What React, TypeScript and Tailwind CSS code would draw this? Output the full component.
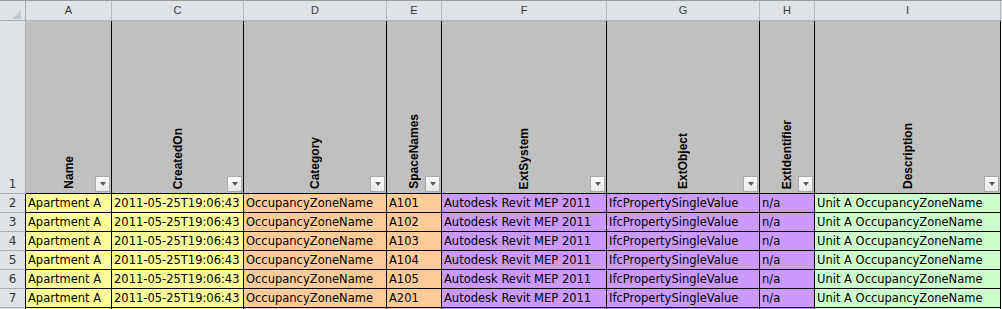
import React from "react";

type Col = { letter: string; title: string; width: string; bg: string };

const cols: Col[] = [
  { letter: "A", title: "Name", width: "w-[86px]", bg: "bg-[#ffff99]" },
  { letter: "C", title: "CreatedOn", width: "w-[132px]", bg: "bg-[#ffff99]" },
  { letter: "D", title: "Category", width: "w-[143px]", bg: "bg-[#ffcc99]" },
  { letter: "E", title: "SpaceNames", width: "w-[55px]", bg: "bg-[#ffcc99]" },
  { letter: "F", title: "ExtSystem", width: "w-[165px]", bg: "bg-[#cc99ff]" },
  { letter: "G", title: "ExtObject", width: "w-[153px]", bg: "bg-[#cc99ff]" },
  { letter: "H", title: "ExtIdentifier", width: "w-[55px]", bg: "bg-[#cc99ff]" },
  { letter: "I", title: "Description", width: "w-[186px]", bg: "bg-[#ccffcc]" },
];

const spaces = ["A101", "A102", "A103", "A104", "A105", "A201"];

// each data row, in column order
const rows = spaces.map((space) => [
  "Apartment A",
  "2011-05-25T19:06:43",
  "OccupancyZoneName",
  space,
  "Autodesk Revit MEP 2011",
  "IfcPropertySingleValue",
  "n/a",
  "Unit A OccupancyZoneName",
]);

function FilterButton() {
  return (
    <div className="absolute right-[1px] bottom-[1px] flex h-[16px] w-[15px] items-center justify-center border border-[#a9a9a9] bg-linear-to-b from-white to-[#e6e6e6]">
      <div className="h-0 w-0 border-t-[4px] border-r-[3.5px] border-l-[3.5px] border-t-[#5a5a5a] border-r-transparent border-l-transparent" />
    </div>
  );
}

export default function App() {
  return (
    <div className="h-[309px] w-[1002px] overflow-hidden bg-white font-['DejaVu_Sans',sans-serif] text-black">
      {/* column letters */}
      <div className="flex h-[21px] border-t border-[#9a9a9a] bg-[#dfe3e8]">
        <div className="relative w-[26px] shrink-0 border-r border-b border-[#a7abb0]">
          <div className="absolute right-[4px] bottom-[1px] h-0 w-0 border-b-[9px] border-l-[9px] border-b-[#c5c9ce] border-l-transparent" />
        </div>
        {cols.map((c) => (
          <div
            key={c.letter}
            className={`${c.width} flex shrink-0 items-center justify-center border-r border-b border-[#b3b8be] font-['Liberation_Sans',Arial,sans-serif] text-[11px] text-[#3a3a3a]`}
          >
            {c.letter}
          </div>
        ))}
        <div className="flex-1 border-b border-[#b3b8be]" />
      </div>

      {/* header row 1 */}
      <div className="flex h-[173px]">
        <div className="flex w-[26px] shrink-0 items-end justify-center border-r border-b border-[#a7abb0] bg-[#dfe3e8] pb-[1px] text-[12px] leading-[16px] text-[#333]">
          1
        </div>
        {cols.map((c) => (
          <div
            key={c.letter}
            className={`${c.width} relative flex shrink-0 items-end justify-center border-r border-b border-black bg-[#c0c0c0] pb-[4px]`}
          >
            <span className="rotate-180 font-['Liberation_Sans',Arial,sans-serif] text-[12px] leading-[14px] font-bold [writing-mode:vertical-rl]">
              {c.title}
            </span>
            <FilterButton />
          </div>
        ))}
        <div className="flex-1" />
      </div>

      {/* data rows */}
      {rows.map((row, i) => (
        <div key={i} className="flex h-[19px]">
          <div className="flex w-[26px] shrink-0 items-center justify-center border-r border-b border-r-black border-b-[#a7abb0] bg-[#dfe3e8] text-[12px] text-[#333]">
            {i + 2}
          </div>
          {row.map((val, j) => (
            <div
              key={j}
              className={`${cols[j].width} ${cols[j].bg} shrink-0 overflow-hidden border-r border-b border-black px-[2px] text-[11.5px] leading-[18px] whitespace-nowrap`}
            >
              {val}
            </div>
          ))}
          <div className="flex-1" />
        </div>
      ))}

      {/* top edge of row 8, only its fill shows */}
      <div className="flex h-[19px]">
        <div className="w-[26px] shrink-0 border-r border-black bg-[#dfe3e8]" />
        {cols.map((c) => (
          <div key={c.letter} className={`${c.width} ${c.bg} shrink-0 border-r border-black`} />
        ))}
        <div className="flex-1" />
      </div>
    </div>
  );
}
